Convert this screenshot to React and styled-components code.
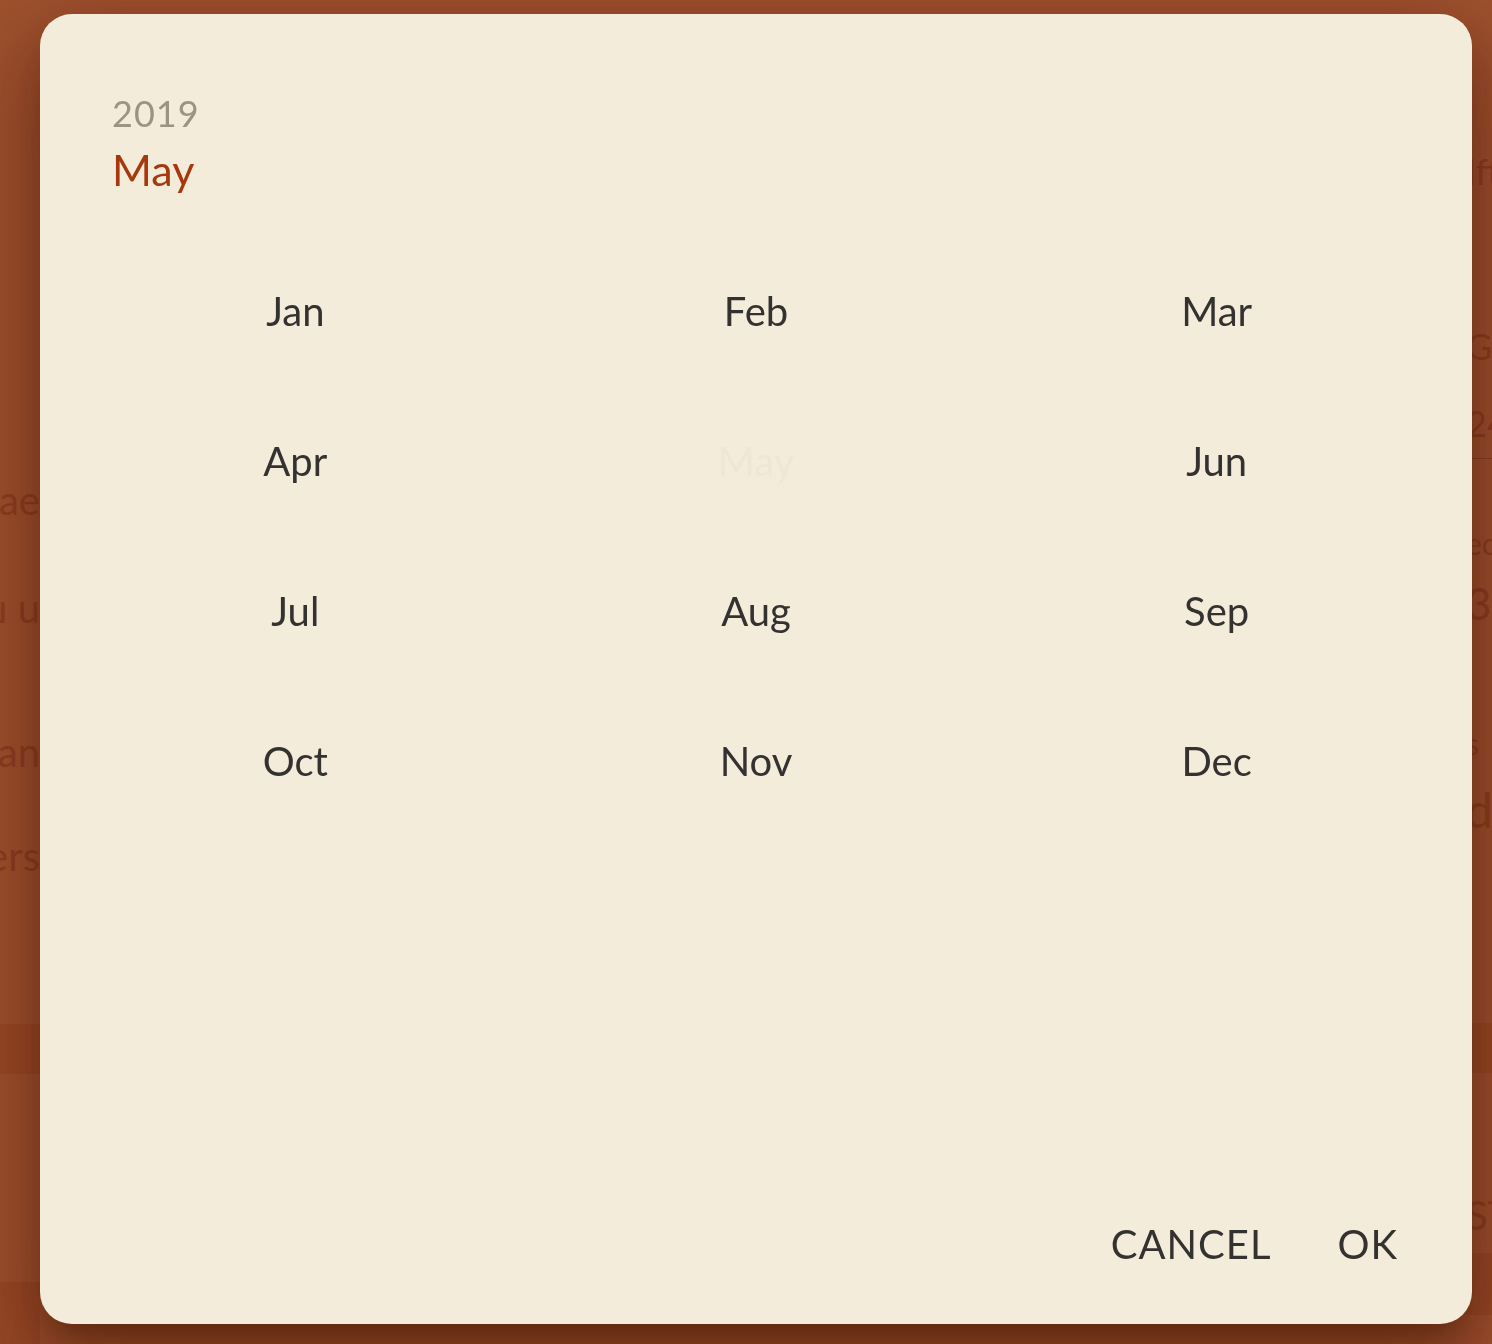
import React, { useState } from "react";
import styled, { createGlobalStyle } from "styled-components";

const GlobalStyle = createGlobalStyle`
  html, body {
    margin: 0;
    padding: 0;
    background: #a0522e;
  }
  * {
    box-sizing: border-box;
  }
`;

const FONT = `Lato, "Open Sans", "Liberation Sans", sans-serif`;

const Page = styled.div`
  width: 1492px;
  height: 1344px;
  overflow: hidden;
  display: flex;
  justify-content: space-between;
  background: #a0522e;
  font-family: ${FONT};
`;

const SideCol = styled.div`
  width: ${(p) => p.$width}px;
  display: flex;
  flex-direction: column;
  overflow: hidden;
`;

const BgLine = styled.div`
  display: flex;
  justify-content: ${(p) => (p.$end ? "flex-end" : "flex-start")};
  margin-top: ${(p) => p.$top}px;
  height: ${(p) => p.$size * 1.2}px;
  font-size: ${(p) => p.$size}px;
  line-height: 1.2;
  white-space: nowrap;
  color: #8c3f21;
`;

const BgRule = styled.div`
  margin-top: ${(p) => p.$top}px;
  height: 1px;
  background: #884022;
`;

const BgBand = styled.div`
  margin-top: ${(p) => p.$top}px;
  height: ${(p) => p.$height}px;
  background: #9a4a26;
`;

const Overlay = styled.div`
  position: fixed;
  inset: 0;
  display: flex;
  align-items: flex-start;
  justify-content: flex-start;
  padding: 14px 20px 20px 40px;
`;

const Dialog = styled.div`
  width: 1432px;
  height: 1310px;
  background: #f4ecdb;
  border-radius: 32px;
  display: flex;
  flex-direction: column;
  font-family: ${FONT};
  box-shadow: 0 22px 30px -14px rgba(60, 20, 0, 0.45),
    0 48px 76px 6px rgba(60, 20, 0, 0.3), 0 18px 92px 16px rgba(60, 20, 0, 0.22);
`;

const Toolbar = styled.div`
  display: flex;
  flex-direction: column;
  align-items: flex-start;
  padding: 78px 0 0 72px;
`;

const YearLabel = styled.div`
  font-size: 36px;
  line-height: 43px;
  letter-spacing: 1px;
  color: #9b9484;
`;

const MonthLabel = styled.div`
  margin-top: 9px;
  font-size: 43px;
  line-height: 52px;
  color: #a5380d;
`;

const MonthGrid = styled.div`
  display: grid;
  grid-template-columns: repeat(3, 1fr);
  grid-auto-rows: 150px;
  margin: 40px 25px 0;
`;

const MonthCell = styled.button`
  border: none;
  background: transparent;
  padding: 0;
  font-family: ${FONT};
  font-size: 40px;
  line-height: 150px;
  text-align: center;
  cursor: pointer;
  color: ${(p) => (p.$selected ? "#efe6d6" : "#333230")};
`;

const Actions = styled.div`
  margin-top: auto;
  display: flex;
  justify-content: flex-end;
  align-items: center;
  gap: 34px;
  padding: 0 58px 44px 0;
`;

const ActionButton = styled.button`
  height: 72px;
  padding: 0 16px;
  border: none;
  background: transparent;
  font-family: ${FONT};
  font-size: 40px;
  line-height: 48px;
  letter-spacing: 1px;
  text-transform: uppercase;
  color: #333230;
  cursor: pointer;
`;

const MONTHS = [
  "Jan", "Feb", "Mar", "Apr", "May", "Jun",
  "Jul", "Aug", "Sep", "Oct", "Nov", "Dec",
];

const LEFT_LINES = [
  { top: 476, size: 40, text: "Lunae" },
  { top: 60, size: 40, text: "Ramadan ш u" },
  { top: 96, size: 40, text: "Hijri Calendaran" },
  { top: 56, size: 40, text: "Reminders" },
];

const RIGHT_LINES = [
  { top: 150, size: 36, text: "Iftar Schedule" },
  { top: 132, size: 36, text: "Gregorian" },
  { top: 34, size: 36, text: "24" },
];

const RIGHT_LINES_2 = [
  { top: 66, size: 30, text: "ecember" },
  { top: 16, size: 44, text: "35" },
  { top: 96, size: 30, text: "s" },
  { top: 20, size: 48, text: "days" },
];

export default function App() {
  const [month, setMonth] = useState(4);

  return (
    <>
      <GlobalStyle />
      <Page>
        <SideCol $width={40}>
          {LEFT_LINES.map((l, i) => (
            <BgLine key={i} $end $top={l.top} $size={l.size}>
              {l.text}
            </BgLine>
          ))}
          <BgBand $top={144} $height={50} />
          <BgBand $top={208} $height={62} />
        </SideCol>
        <SideCol $width={26}>
          {RIGHT_LINES.map((l, i) => (
            <BgLine key={i} $top={l.top} $size={l.size}>
              {l.text}
            </BgLine>
          ))}
          <BgRule $top={12} />
          {RIGHT_LINES_2.map((l, i) => (
            <BgLine key={i} $top={l.top} $size={l.size}>
              {l.text}
            </BgLine>
          ))}
          <BgBand $top={184} $height={50} />
          <BgLine $top={118} $size={40}>
            STATS
          </BgLine>
          <BgBand $top={14} $height={62} />
        </SideCol>
      </Page>

      <Overlay>
        <Dialog>
          <Toolbar>
            <YearLabel>2019</YearLabel>
            <MonthLabel>{MONTHS[month]}</MonthLabel>
          </Toolbar>
          <MonthGrid>
            {MONTHS.map((m, i) => (
              <MonthCell
                key={m}
                $selected={i === month}
                onClick={() => setMonth(i)}>
                {m}
              </MonthCell>
            ))}
          </MonthGrid>
          <Actions>
            <ActionButton>Cancel</ActionButton>
            <ActionButton>OK</ActionButton>
          </Actions>
        </Dialog>
      </Overlay>
    </>
  );
}
